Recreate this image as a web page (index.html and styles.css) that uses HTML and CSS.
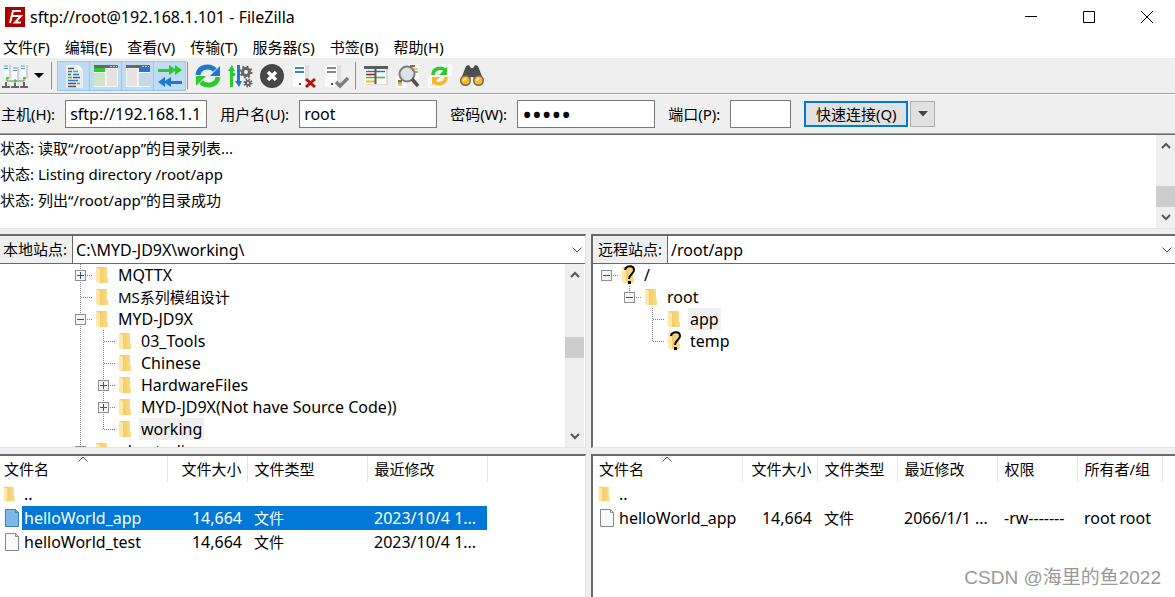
FILE: index.html
```html
<!DOCTYPE html>
<html lang="zh-CN">
<head>
    <meta charset="UTF-8">
    <meta name="viewport" content="width=device-width, initial-scale=1.0">
    <title>sftp://root@192.168.1.101 - FileZilla</title>
    <link rel="stylesheet" href="styles.css">
</head>
<body>
    <!-- Shared icons -->
    <svg class="hidden" aria-hidden="true">
        <linearGradient id="folderFill" x1="0" x2="1">
            <stop offset="0" stop-color="#f0c55e"/>
            <stop offset="1" stop-color="#fbdc85"/>
        </linearGradient>
        <symbol id="folder" viewBox="0 0 24 22">
            <path d="M4 3h11v10l1 1v5H6z" fill="url(#folderFill)"/>
            <path d="M4 3l4 2v15l-4-2z" fill="#ffe8a6"/>
        </symbol>
        <symbol id="question" viewBox="0 0 24 22">
            <use href="#folder" width="24" height="22"/>
            <path d="M7 6c1-5 9-5 9 0 0 4-5 4-5 9" fill="none" stroke="#000" stroke-width="2"/>
            <path d="M10 17h3v3h-3z"/>
        </symbol>
        <symbol id="file" viewBox="0 0 22 24">
            <path d="M5.500 3.500h10l3 3v14h-13z" fill="#f8fafb" stroke="#8b8b8b"/>
            <path d="M15.500 3.500v3h3" fill="none" stroke="#8b8b8b"/>
        </symbol>
        <symbol id="file-selected" viewBox="0 0 22 24">
            <path d="M5.500 3.500h10l3 3v14h-13z" fill="#7db8e8" stroke="#3d7fb5"/>
            <path d="M15.500 3.500v3h3" fill="none" stroke="#3d7fb5"/>
        </symbol>
        <g id="box">
            <rect x="6.500" y="6.500" width="10" height="10" rx="1" fill="#f6f6f6" stroke="#8f8f8f"/>
            <path d="M8 11.500h7" stroke="#32509a"/>
        </g>
        <symbol id="line" viewBox="0 0 23 22">
            <path d="M11.500 0v22" class="dots"/>
        </symbol>
        <symbol id="tee" viewBox="0 0 23 22">
            <path d="M11.500 0v22M12 11.500h12" class="dots"/>
        </symbol>
        <symbol id="elbow" viewBox="0 0 23 22">
            <path d="M11.500 0v11M12 11.500h12" class="dots"/>
        </symbol>
        <symbol id="plus" viewBox="0 0 23 22">
            <path d="M11.500 0v22M18 11.500h6" class="dots"/>
            <use href="#box"/>
            <path d="M11.500 8v7" stroke="#32509a"/>
        </symbol>
        <symbol id="minus" viewBox="0 0 23 22">
            <path d="M11.500 0v22M18 11.500h6" class="dots"/>
            <use href="#box"/>
        </symbol>
        <symbol id="minus-root" viewBox="0 0 23 22">
            <path d="M18 11.500h6" class="dots"/>
            <use href="#box"/>
        </symbol>
        <symbol id="minus-last" viewBox="0 0 23 22">
            <path d="M11.500 0v7M18 11.500h6" class="dots"/>
            <use href="#box"/>
        </symbol>
        <symbol id="up" viewBox="0 0 10 7">
            <path d="M1 6l4-4 4 4" fill="none" stroke="#555" stroke-width="2"/>
        </symbol>
        <symbol id="down" viewBox="0 0 10 7">
            <path d="M1 1l4 4 4-4" fill="none" stroke="#555" stroke-width="2"/>
        </symbol>
    </svg>

    <header class="titlebar">
        <svg class="logo" viewBox="0 0 20 20">
            <path d="M0 0h20v20H0z" fill="#b30000"/>
            <path d="M1 1h18v18H1z" fill="none" stroke="#8e0000" stroke-dasharray="1 1"/>
            <path d="M5 16L8 4h8M7 9h5M10 9h6l-6 6.500h6" fill="none" stroke="#fff" stroke-width="2"/>
        </svg>
        <h1>sftp://root@192.168.1.101 - FileZilla</h1>
        <div class="window-buttons">
            <button aria-label="最小化"><svg viewBox="0 0 12 12"><path d="M0 5.500h12" stroke="#000"/></svg></button>
            <button aria-label="最大化"><svg viewBox="0 0 12 12"><path d="M.5.5h11v11H.5z" fill="none" stroke="#000"/></svg></button>
            <button aria-label="关闭"><svg viewBox="0 0 12 12"><path d="M0 0l12 12M12 0L0 12" stroke="#000"/></svg></button>
        </div>
    </header>

    <nav class="menubar">
        <button>文件(F)</button>
        <button>编辑(E)</button>
        <button>查看(V)</button>
        <button>传输(T)</button>
        <button>服务器(S)</button>
        <button>书签(B)</button>
        <button>帮助(H)</button>
    </nav>

    <div class="toolbar">
        <button class="tool site" aria-label="站点管理器">
            <svg viewBox="0 0 26 26">
                <path d="M2 2h7v13H2zM10 4h7v13h-7zM19 2h7v13h-7z" fill="#fafafa"/>
                <path d="M7 2h2v13H7zM15 4h2v13h-2zM24 2h2v13h-2z" fill="#d0d0d0"/>
                <path d="M2 3h4M11 5h4M19 3h4M2 5.500h4M11 7.500h4M19 5.500h4" stroke="#4a90d9"/>
                <path d="M5 15v3h17v-3M13 16v6" fill="none" stroke="#777" stroke-width="1"/>
                <path d="M4 15h3M12 18h3M21 15h3" stroke="#3fca3f" stroke-width="2"/>
                <path d="M0 24h8M9 24h8M18 24h8M4 19v5M13 20v4M22 19v5" stroke="#666" stroke-width="2"/>
            </svg>
        </button>
        <button class="tool arrow" aria-label="站点列表">
            <svg viewBox="0 0 10 6"><path d="M0 0h10L5 5z"/></svg>
        </button>
        <span class="separator"></span>
        <div class="toggles">
            <button class="tool on" aria-label="消息日志">
                <svg viewBox="0 0 26 26">
                    <path d="M5 2h12l5 5v18H5z" fill="#e9edf0"/>
                    <path d="M17 2v5h5z" fill="#fff"/>
                    <path d="M7 5.500h6M7 11.500h3M12 14.500h7M7 20.500h8" stroke="#555" stroke-width="1.500"/>
                    <path d="M12 8.500h5M7 14.500h4M16 20.500h3" stroke="#2fce2f" stroke-width="1.500"/>
                    <path d="M7 8.500h4M12 11.500h6M7 17.500h10" stroke="#2478cf" stroke-width="1.500"/>
                    <path d="M7 23.500h8" stroke="#555" stroke-width="1.500"/>
                </svg>
            </button>
            <button class="tool on" aria-label="本地目录树">
                <svg viewBox="0 0 26 26">
                    <path d="M1 4h24v20H1z" fill="#f4f4f4"/>
                    <path d="M1 2h24v3H1z" fill="#666"/>
                    <path d="M17 3.500h2M20 3.500h2M23 3.500h1" stroke="#ccc"/>
                    <path d="M1 5h11v4H1z" fill="#2bcb2b"/>
                    <path d="M1 10h11v13H1z" fill="#cde6ca"/>
                    <path d="M14 6h10v17H14z" fill="#e3e3e3"/>
                </svg>
            </button>
            <button class="tool on" aria-label="远程目录树">
                <svg viewBox="0 0 26 26">
                    <path d="M1 4h24v20H1z" fill="#f4f4f4"/>
                    <path d="M1 2h24v3H1z" fill="#666"/>
                    <path d="M17 3.500h2M20 3.500h2M23 3.500h1" stroke="#ccc"/>
                    <path d="M14 5h11v4H14z" fill="#1f78d1"/>
                    <path d="M14 10h11v13H14z" fill="#c8d7e5"/>
                    <path d="M2 6h10v17H2z" fill="#e3e3e3"/>
                </svg>
            </button>
            <button class="tool on" aria-label="传输队列">
                <svg viewBox="0 0 26 26">
                    <path d="M1 6h11V2l6 4V2l7 5-7 5V8l-6 4V9H1z" fill="#2bcb2b"/>
                    <path d="M25 18H14v-4l-6 4v-4l-7 5 7 5v-4l6 4v-3h11z" fill="#1f78d1"/>
                </svg>
            </button>
        </div>
        <span class="separator"></span>
        <button class="tool" aria-label="刷新">
            <svg viewBox="0 0 26 26">
                <path d="M3 12c1-9 12-10 17-5" fill="none" stroke="#1f78d1" stroke-width="5"/>
                <path d="M25 3v10H15z" fill="#1f78d1"/>
                <path d="M23 14c-1 9-12 10-17 5" fill="none" stroke="#2bcb2b" stroke-width="5"/>
                <path d="M1 23V13h10z" fill="#2bcb2b"/>
            </svg>
        </button>
        <button class="tool" aria-label="处理队列">
            <svg viewBox="0 0 26 26">
                <path d="M3 24V8H1l4-6 3 6H6v16zM6 10h2v3H6z" fill="#2bcb2b"/>
                <path d="M10 2h3v16h2l-3 6-4-6h2z" fill="#1f78d1"/>
                <circle cx="19" cy="9" r="3.500" fill="none" stroke="#666" stroke-width="3"/>
                <circle cx="19" cy="9" r="5.500" fill="none" stroke="#666" stroke-width="2" stroke-dasharray="2 2.300"/>
                <circle cx="21" cy="20" r="2" fill="none" stroke="#666" stroke-width="2"/>
                <circle cx="21" cy="20" r="3.500" fill="none" stroke="#666" stroke-width="2" stroke-dasharray="1.500 1.250"/>
            </svg>
        </button>
        <button class="tool" aria-label="取消当前操作">
            <svg viewBox="0 0 26 26">
                <circle cx="13" cy="13" r="12" fill="#474747"/>
                <path d="M9 9l8 8M17 9l-8 8" stroke="#fff" stroke-width="3.500"/>
            </svg>
        </button>
        <button class="tool" aria-label="断开连接">
            <svg viewBox="0 0 26 26">
                <path d="M2 2h16v22H2z" fill="#fafafa"/>
                <path d="M14 2h4v22h-4z" fill="#e0e0e0"/>
                <path d="M4 5h9M4 9h9" stroke="#3b86d1" stroke-width="2"/>
                <path d="M8 20h2v2H8z" fill="#555"/>
                <path d="M15 16l9 8M24 16l-9 8" stroke="#b31212" stroke-width="3"/>
            </svg>
        </button>
        <button class="tool" aria-label="重新连接">
            <svg viewBox="0 0 26 26">
                <path d="M2 2h16v22H2z" fill="#fafafa"/>
                <path d="M14 2h4v22h-4z" fill="#e0e0e0"/>
                <path d="M4 5h9M4 9h9" stroke="#888" stroke-width="2"/>
                <path d="M8 20h2v2H8z" fill="#555"/>
                <path d="M13 19l4 4 8-8" fill="none" stroke="#808080" stroke-width="3.500"/>
            </svg>
        </button>
        <span class="separator"></span>
        <button class="tool" aria-label="目录过滤器">
            <svg viewBox="0 0 26 26">
                <path d="M2 4h23v18H2z" fill="#fafafa"/>
                <path d="M23 6h2v16H3v-1h20z" fill="#dcdcdc"/>
                <path d="M1 3h24v3H1z" fill="#5c5c5c"/>
                <path d="M3 8.500h19" stroke="#1f78d1" stroke-width="1.500"/>
                <path d="M3 11.500h9" stroke="#b31212" stroke-width="1.500"/>
                <path d="M3 14.500h19" stroke="#2bcb2b" stroke-width="1.500"/>
                <path d="M3 18.500h9" stroke="#f2b929" stroke-width="2"/>
                <path d="M12.500 6v15" stroke="#5c5c5c" stroke-width="2"/>
            </svg>
        </button>
        <button class="tool" aria-label="目录对比">
            <svg viewBox="0 0 26 26">
                <path d="M13 1h11v15H13zM1 13h11v12H1z" fill="#fafafa"/>
                <path d="M15 3h5M3 18h4" stroke="#b31212" stroke-width="1.500"/>
                <path d="M17 6h6M3 22h4" stroke="#f2b929" stroke-width="1.500"/>
                <path d="M19 9h4M3 20h4" stroke="#2bcb2b" stroke-width="1.500"/>
                <circle cx="12" cy="11" r="7.500" fill="#dce2e8" stroke="#7d7d7d" stroke-width="2"/>
                <path d="M17 16l6 7" stroke="#505050" stroke-width="3.500"/>
            </svg>
        </button>
        <button class="tool" aria-label="同步浏览">
            <svg viewBox="0 0 26 26">
                <path d="M12 1h13v12H12zM1 13h12v12H1z" fill="#fafafa"/>
                <path d="M16 4h6M3 22h6" stroke="#ddd"/>
                <path d="M6 12c0-7 8-8 12-5" fill="none" stroke="#2bcb2b" stroke-width="3.500"/>
                <path d="M20 4v8h-8z" fill="#2bcb2b"/>
                <path d="M19 14c0 7-8 8-12 5" fill="none" stroke="#f6b92b" stroke-width="3.500"/>
                <path d="M5 22v-8h8z" fill="#f6b92b"/>
            </svg>
        </button>
        <button class="tool" aria-label="查找文件">
            <svg viewBox="0 0 26 26">
                <path d="M7 3l3-1 2 3h2l2-3 3 1 5 13-6 3-4-5h-2l-4 5-6-3z" fill="#4e4e4e"/>
                <circle cx="6.500" cy="17.500" r="5.500" fill="#666"/>
                <circle cx="19.500" cy="17.500" r="5.500" fill="#666"/>
                <circle cx="6.500" cy="17.500" r="4" fill="#fdb813"/>
                <circle cx="19.500" cy="17.500" r="4" fill="#fdb813"/>
                <path d="M4 18l3-3M17 18l3-3" stroke="#fff0b8" stroke-width="1.500"/>
            </svg>
        </button>
    </div>

    <form class="quickconnect">
        <label for="host">主机(H):</label>
        <input id="host" class="host" type="text" value="sftp://192.168.1.101">
        <label for="user">用户名(U):</label>
        <input id="user" type="text" value="root">
        <label for="pass">密码(W):</label>
        <input id="pass" class="pass" type="password" value="12345">
        <label for="port">端口(P):</label>
        <input id="port" class="port" type="text">
        <button type="button" class="connect">快速连接(Q)</button>
        <button type="button" class="history" aria-label="历史记录">
            <svg viewBox="0 0 10 6"><path d="M0 0h10L5 5.500z" fill="#444"/></svg>
        </button>
    </form>

    <section class="log">
        <ul>
            <li>状态: 读取“/root/app”的目录列表...</li>
            <li>状态: Listing directory /root/app</li>
            <li>状态: 列出“/root/app”的目录成功</li>
        </ul>
        <div class="scrollbar">
            <svg><use href="#up"/></svg>
            <span class="thumb"></span>
            <svg><use href="#down"/></svg>
        </div>
    </section>

    <main class="panes">
        <section class="pane tree-pane">
            <div class="site-row">
                <label for="local">本地站点:</label>
                <select id="local"><option>C:\MYD-JD9X\working\</option></select>
                <svg class="chevron" viewBox="0 0 10 6"><path d="M.5.5L5 5 9.500.5" fill="none" stroke="#555"/></svg>
            </div>
            <div class="tree-area">
                <ul class="tree local-tree">
                    <li><svg class="guide"><use href="#plus"/></svg><svg class="icon"><use href="#folder"/></svg><span>MQTTX</span></li>
                    <li><svg class="guide"><use href="#tee"/></svg><svg class="icon"><use href="#folder"/></svg><span class="cjk">MS系列模组设计</span></li>
                    <li><svg class="guide"><use href="#minus"/></svg><svg class="icon"><use href="#folder"/></svg><span>MYD-JD9X</span></li>
                    <li><svg class="guide"><use href="#line"/></svg><svg class="guide"><use href="#tee"/></svg><svg class="icon"><use href="#folder"/></svg><span>03_Tools</span></li>
                    <li><svg class="guide"><use href="#line"/></svg><svg class="guide"><use href="#tee"/></svg><svg class="icon"><use href="#folder"/></svg><span>Chinese</span></li>
                    <li><svg class="guide"><use href="#line"/></svg><svg class="guide"><use href="#plus"/></svg><svg class="icon"><use href="#folder"/></svg><span>HardwareFiles</span></li>
                    <li><svg class="guide"><use href="#line"/></svg><svg class="guide"><use href="#plus"/></svg><svg class="icon"><use href="#folder"/></svg><span>MYD-JD9X(Not have Source Code))</span></li>
                    <li><svg class="guide"><use href="#line"/></svg><svg class="guide"><use href="#elbow"/></svg><svg class="icon"><use href="#folder"/></svg><span class="current">working</span></li>
                    <li><svg class="guide"><use href="#plus"/></svg><svg class="icon"><use href="#folder"/></svg><span>phpstudio</span></li>
                </ul>
                <div class="scrollbar tree-scroll">
                    <svg><use href="#up"/></svg>
                    <span class="thumb"></span>
                    <svg><use href="#down"/></svg>
                </div>
            </div>
        </section>

        <section class="pane tree-pane">
            <div class="site-row">
                <label for="remote">远程站点:</label>
                <select id="remote"><option>/root/app</option></select>
                <svg class="chevron" viewBox="0 0 10 6"><path d="M.5.5L5 5 9.500.5" fill="none" stroke="#555"/></svg>
            </div>
            <div class="tree-area">
                <ul class="tree remote-tree">
                    <li><svg class="guide"><use href="#minus-root"/></svg><svg class="icon"><use href="#question"/></svg><span>/</span></li>
                    <li><svg class="guide"></svg><svg class="guide"><use href="#minus-last"/></svg><svg class="icon"><use href="#folder"/></svg><span>root</span></li>
                    <li><svg class="guide"></svg><svg class="guide"></svg><svg class="guide"><use href="#tee"/></svg><svg class="icon"><use href="#folder"/></svg><span class="current">app</span></li>
                    <li><svg class="guide"></svg><svg class="guide"></svg><svg class="guide"><use href="#elbow"/></svg><svg class="icon"><use href="#question"/></svg><span>temp</span></li>
                </ul>
            </div>
        </section>

        <section class="pane">
            <table class="files">
                <colgroup>
                    <col class="w-name-local"><col class="w-size-local"><col class="w-wide"><col class="w-wide"><col>
                </colgroup>
                <thead>
                    <tr>
                        <th class="sorted">文件名<svg class="sort" viewBox="0 0 10 6"><path d="M.5 5.500L5 1l4.500 4.500" fill="none" stroke="#555"/></svg></th>
                        <th class="size">文件大小</th>
                        <th>文件类型</th>
                        <th>最近修改</th>
                        <th></th>
                    </tr>
                </thead>
                <tbody>
                    <tr>
                        <td class="name"><div><svg><use href="#folder"/></svg><span>..</span></div></td>
                        <td></td><td></td><td></td><td></td>
                    </tr>
                    <tr class="selected">
                        <td class="name"><div><svg><use href="#file-selected"/></svg><span>helloWorld_app</span></div></td>
                        <td class="size">14,664</td>
                        <td class="cjk">文件</td>
                        <td>2023/10/4 1...</td>
                        <td></td>
                    </tr>
                    <tr>
                        <td class="name"><div><svg><use href="#file"/></svg><span>helloWorld_test</span></div></td>
                        <td class="size">14,664</td>
                        <td class="cjk">文件</td>
                        <td>2023/10/4 1...</td>
                        <td></td>
                    </tr>
                </tbody>
            </table>
        </section>

        <section class="pane">
            <table class="files">
                <colgroup>
                    <col class="w-name-remote"><col class="w-size-remote"><col class="w-narrow"><col class="w-date"><col class="w-narrow"><col class="w-owner"><col>
                </colgroup>
                <thead>
                    <tr>
                        <th class="sorted">文件名<svg class="sort" viewBox="0 0 10 6"><path d="M.5 5.500L5 1l4.500 4.500" fill="none" stroke="#555"/></svg></th>
                        <th class="size">文件大小</th>
                        <th>文件类型</th>
                        <th>最近修改</th>
                        <th>权限</th>
                        <th>所有者/组</th>
                        <th></th>
                    </tr>
                </thead>
                <tbody>
                    <tr>
                        <td class="name"><div><svg><use href="#folder"/></svg><span>..</span></div></td>
                        <td></td><td></td><td></td><td></td><td></td><td></td>
                    </tr>
                    <tr>
                        <td class="name"><div><svg><use href="#file"/></svg><span>helloWorld_app</span></div></td>
                        <td class="size">14,664</td>
                        <td class="cjk">文件</td>
                        <td>2066/1/1 ...</td>
                        <td>-rw-------</td>
                        <td>root root</td>
                        <td></td>
                    </tr>
                </tbody>
            </table>
        </section>
    </main>

    <p class="watermark">CSDN @海里的鱼2022</p>
</body>
</html>
```
FILE: styles.css
```css
* {
    box-sizing: border-box;
}
body {
    margin: 0;
    height: 100vh;
    display: flex;
    flex-direction: column;
    overflow: hidden;
    font-family: "Noto Sans", "Noto Sans CJK SC", sans-serif;
    font-size: 15px;
    line-height: 22px;
    color: #000;
    background-color: #fff;
}
ul {
    list-style: none;
    margin: 0;
    padding: 0;
}
button, input, select {
    font: inherit;
    color: inherit;
}
button {
    padding: 0;
    border: none;
    background: none;
}
svg {
    display: block;
    flex: none;
}
.hidden {
    position: absolute;
    width: 0;
    height: 0;
}

/* Title bar and menu */
.titlebar {
    display: flex;
    align-items: center;
    height: 33px;
    padding-left: 5px;
}
.logo {
    width: 20px;
    height: 20px;
    margin-right: 5px;
}
.titlebar h1 {
    margin: 0;
    font-size: 16px;
    font-weight: normal;
}
.window-buttons {
    display: flex;
    gap: 2px;
    margin-left: auto;
}
.window-buttons button {
    display: flex;
    align-items: center;
    justify-content: center;
    width: 56px;
    height: 33px;
}
.window-buttons svg {
    width: 12px;
    height: 12px;
}
.menubar {
    display: flex;
    gap: 15px;
    height: 25px;
    padding: 2px 0 0 3px;
}

/* Toolbar */
.toolbar {
    display: flex;
    align-items: center;
    height: 36px;
    background-color: #efefef;
    border-bottom: 1px solid #a0a0a0;
}
.tool {
    display: flex;
    align-items: center;
    justify-content: center;
    width: 32px;
    height: 32px;
}
.tool svg {
    width: 26px;
    height: 26px;
}
.site {
    width: 30px;
}
.arrow {
    width: 18px;
}
.arrow svg, .history svg {
    width: 10px;
    height: 6px;
}
.separator {
    width: 1px;
    height: 27px;
    margin: 0 4px 0 3px;
    background-color: #8c8c8c;
}
.toggles {
    display: flex;
    margin-left: 1px;
    border-right: 1px solid #90c8f6;
}
.on {
    height: 30px;
    background-color: #c0dcf3;
    border: 1px solid #90c8f6;
    border-right: none;
}
.toggles + .separator {
    margin-left: 1px;
}

/* Quick connect */
.quickconnect {
    display: flex;
    align-items: center;
    height: 39px;
    padding-left: 1px;
    background-color: #efefef;
    border-top: 1px solid #fff;
}
.quickconnect label {
    margin-right: 10px;
}
.quickconnect input {
    width: 138px;
    height: 28px;
    margin: 0 13px 0 0;
    padding: 0 4px;
    border: 1px solid #7a7a7a;
    border-radius: 0;
    font-size: 16px;
    background-color: #fff;
}
.quickconnect .host {
    width: 142px;
}
.quickconnect .pass {
    font-size: 26px;
}
.quickconnect .port {
    width: 61px;
}
.connect {
    width: 104px;
    height: 26px;
    margin-right: 2px;
    border: 2px solid #0078d7;
    background-color: #e1e1e1;
}
.history {
    display: flex;
    align-items: center;
    justify-content: center;
    width: 25px;
    height: 26px;
    border: 1px solid #adadad;
    background-color: #e1e1e1;
}

/* Message log */
.log {
    display: flex;
    justify-content: space-between;
    height: 96px;
    border-top: 1px solid #a0a0a0;
    border-bottom: 1px solid #e3e3e3;
    box-shadow: inset 0 1px #696969;
}
.log ul {
    padding-top: 1px;
    line-height: 26px;
}
.scrollbar {
    display: flex;
    flex-direction: column;
    align-items: center;
    width: 19px;
    margin-top: 1px;
    padding: 7px 0;
    background-color: #efefef;
}
.scrollbar svg {
    width: 10px;
    height: 7px;
}
.scrollbar .thumb {
    width: 19px;
    height: 21px;
    margin-top: auto;
    margin-bottom: 7px;
    background-color: #cdcdcd;
}

/* Panes */
.panes {
    flex: 1;
    display: grid;
    grid-template-columns: minmax(0, 586fr) minmax(0, 584fr);
    grid-template-rows: 214px 1fr;
    gap: 6px 5px;
    padding-top: 5px;
    background-color: #efefef;
}
.pane {
    overflow: hidden;
    background-color: #fff;
    border-top: 2px solid #696969;
    border-right: 1px solid #e3e3e3;
}
.pane:nth-child(even) {
    border-left: 2px solid #696969;
    border-right: none;
}
.tree-pane {
    display: flex;
    flex-direction: column;
    border-bottom: 1px solid #e3e3e3;
}
.site-row {
    position: relative;
    display: flex;
    flex: none;
    height: 28px;
    border-bottom: 1px solid #696969;
}
.site-row label {
    padding: 2px 5px 0 3px;
    background-color: #efefef;
    border-right: 1px solid #696969;
}
.pane:nth-child(even) .site-row label {
    padding-left: 5px;
}
.site-row select {
    flex: 1;
    min-width: 0;
    appearance: none;
    padding: 0 24px 0 3px;
    border: none;
    border-radius: 0;
    font-size: 16px;
    background-color: #fff;
}
.chevron {
    position: absolute;
    top: 11px;
    right: 3px;
    width: 10px;
    height: 6px;
    pointer-events: none;
}
.tree-area {
    flex: 1;
    display: flex;
    justify-content: space-between;
    min-height: 0;
}
.tree {
    overflow: hidden;
    font-size: 16px;
}
.tree li {
    display: flex;
    height: 22px;
    white-space: nowrap;
}
.tree span {
    padding: 0 2px;
}
.tree .current {
    background-color: #efefef;
}
.local-tree {
    padding-left: 69px;
}
.remote-tree {
    padding-left: 2px;
}
.guide {
    width: 23px;
    height: 22px;
    shape-rendering: crispEdges;
}
.icon {
    width: 24px;
    height: 22px;
}
.dots {
    fill: none;
    stroke: #808080;
    stroke-dasharray: 1 1;
}
.tree-scroll {
    margin: 0 1px 0 0;
}
.tree-scroll .thumb {
    margin-top: 59px;
    margin-bottom: auto;
}

/* File lists */
.files {
    width: 100%;
    table-layout: fixed;
    border-collapse: collapse;
}
.files th, .files td {
    height: 24px;
    padding: 0 5px 0 7px;
    font-weight: normal;
    text-align: left;
    white-space: nowrap;
}
.files td {
    font-size: 16px;
}
.files th {
    height: 26px;
    border-right: 1px solid #e5e5e5;
}
.files th:last-child {
    border-right: none;
}
.files .sorted {
    position: relative;
    padding-left: 4px;
}
.pane:nth-child(even) .sorted {
    padding-left: 6px;
}
.sort {
    position: absolute;
    top: 0;
    left: calc(50% - 5px);
    width: 10px;
    height: 6px;
}
.files .size {
    text-align: right;
}
.files .name {
    padding: 0;
}
.pane:nth-child(even) .name {
    padding-left: 2px;
}
.name div {
    display: flex;
}
.name svg {
    width: 22px;
    height: 24px;
}
.name span {
    flex: 1;
    padding-left: 2px;
    line-height: 24px;
}
.selected td {
    color: #fff;
    background-color: #0078d7;
}
.selected .name {
    background: none;
}
.selected .name span {
    background-color: #0078d7;
}
.files .selected td:last-child {
    background: none;
}
.tree .cjk, .files .cjk {
    font-size: 15px;
}
.w-name-local {
    width: 167px;
}
.w-size-local, .w-narrow {
    width: 80px;
}
.w-wide {
    width: 120px;
}
.w-name-remote {
    width: 149px;
}
.w-size-remote {
    width: 75px;
}
.w-date {
    width: 100px;
}
.w-owner {
    width: 85px;
}

.watermark {
    position: absolute;
    right: 14px;
    bottom: 8px;
    margin: 0;
    font-family: "Liberation Sans", "Noto Sans CJK SC", sans-serif;
    font-size: 19px;
    color: #999;
}
```
